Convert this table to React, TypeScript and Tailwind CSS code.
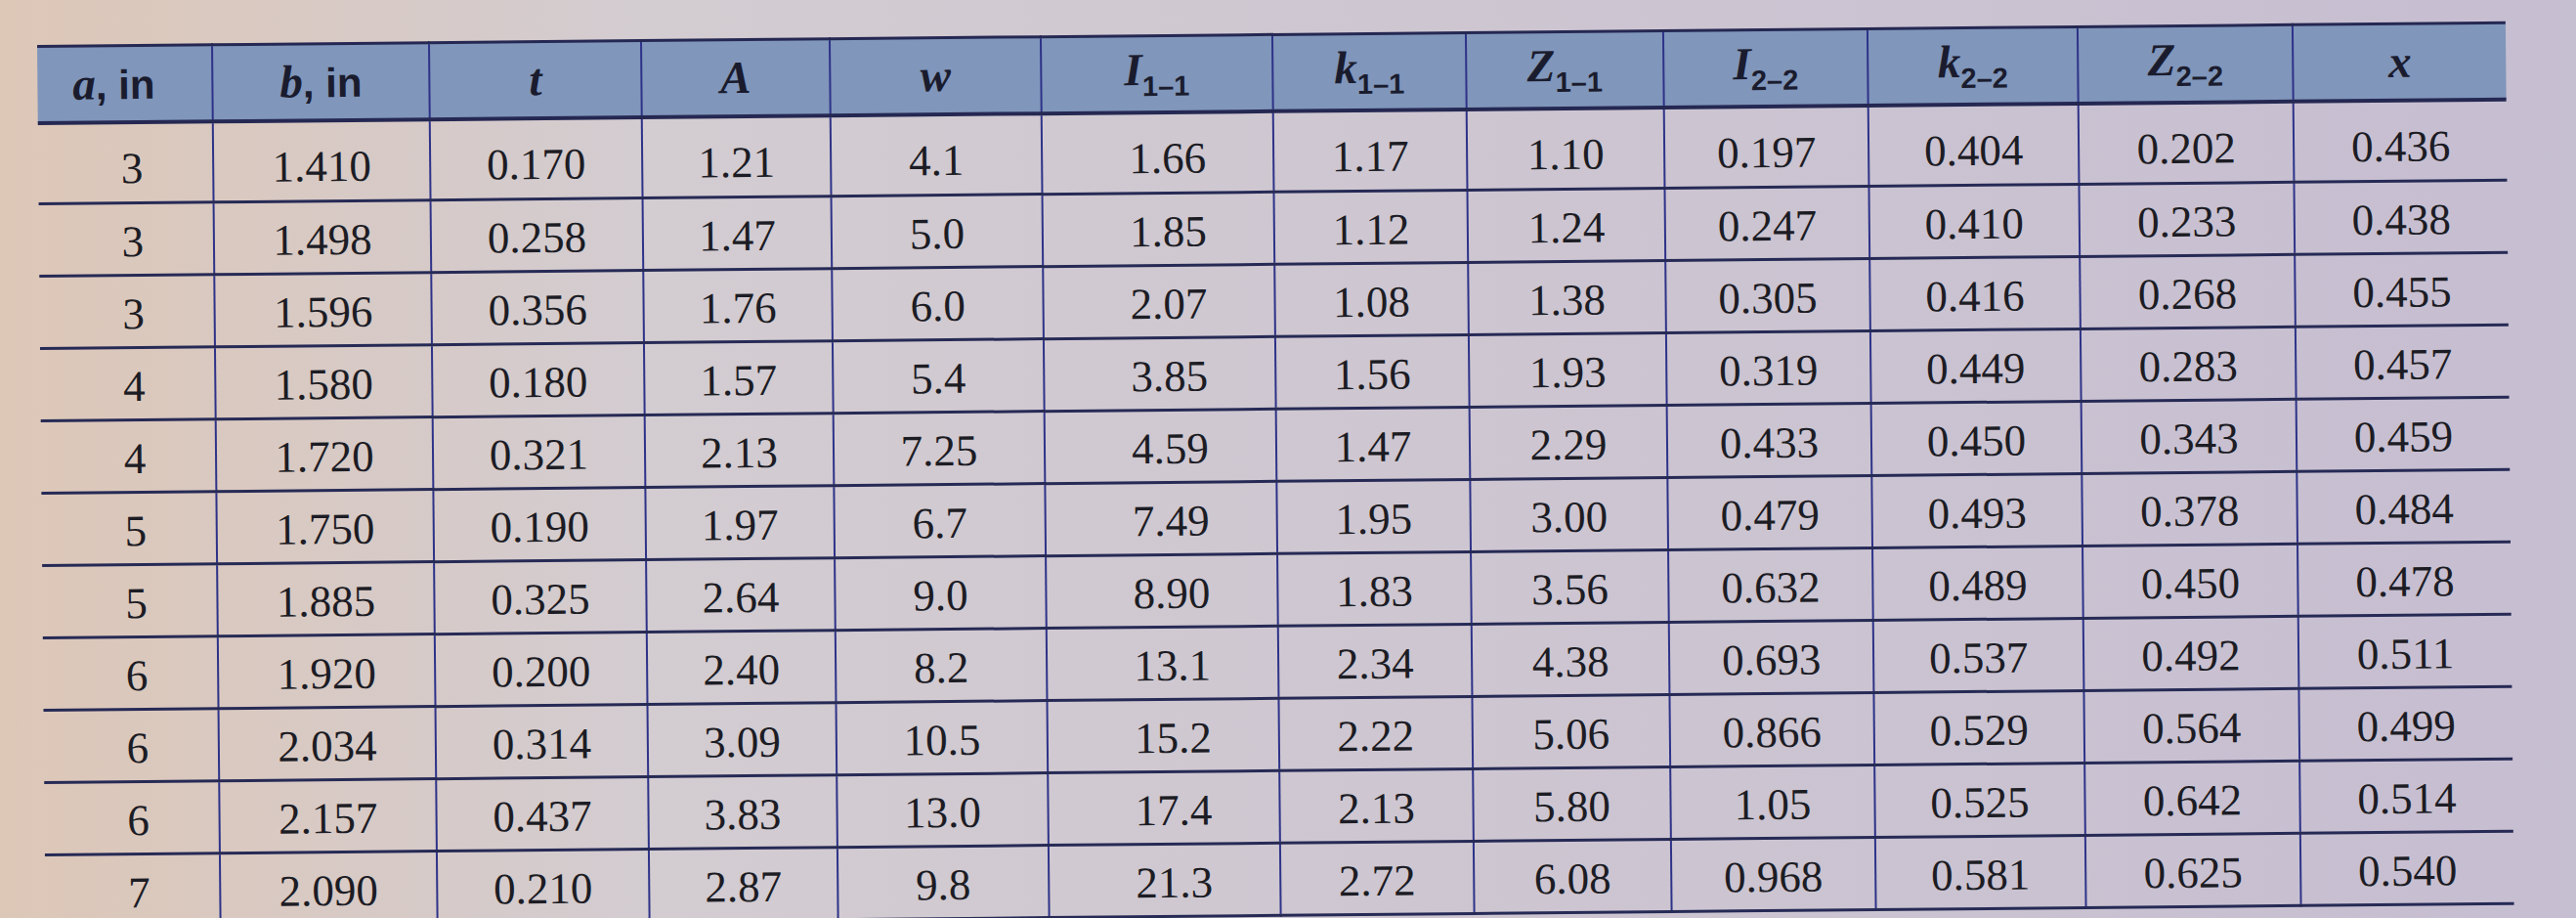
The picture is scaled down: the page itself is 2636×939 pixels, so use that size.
import React from "react";

const widths = [
  "w-[179px]",
  "w-[222px]",
  "w-[217px]",
  "w-[193px]",
  "w-[216px]",
  "w-[237px]",
  "w-[198px]",
  "w-[202px]",
  "w-[209px]",
  "w-[215px]",
  "w-[220px]",
  "w-[218px]",
];

const rows: string[][] = [
  ["3", "1.410", "0.170", "1.21", "4.1", "1.66", "1.17", "1.10", "0.197", "0.404", "0.202", "0.436"],
  ["3", "1.498", "0.258", "1.47", "5.0", "1.85", "1.12", "1.24", "0.247", "0.410", "0.233", "0.438"],
  ["3", "1.596", "0.356", "1.76", "6.0", "2.07", "1.08", "1.38", "0.305", "0.416", "0.268", "0.455"],
  ["4", "1.580", "0.180", "1.57", "5.4", "3.85", "1.56", "1.93", "0.319", "0.449", "0.283", "0.457"],
  ["4", "1.720", "0.321", "2.13", "7.25", "4.59", "1.47", "2.29", "0.433", "0.450", "0.343", "0.459"],
  ["5", "1.750", "0.190", "1.97", "6.7", "7.49", "1.95", "3.00", "0.479", "0.493", "0.378", "0.484"],
  ["5", "1.885", "0.325", "2.64", "9.0", "8.90", "1.83", "3.56", "0.632", "0.489", "0.450", "0.478"],
  ["6", "1.920", "0.200", "2.40", "8.2", "13.1", "2.34", "4.38", "0.693", "0.537", "0.492", "0.511"],
  ["6", "2.034", "0.314", "3.09", "10.5", "15.2", "2.22", "5.06", "0.866", "0.529", "0.564", "0.499"],
  ["6", "2.157", "0.437", "3.83", "13.0", "17.4", "2.13", "5.80", "1.05", "0.525", "0.642", "0.514"],
  ["7", "2.090", "0.210", "2.87", "9.8", "21.3", "2.72", "6.08", "0.968", "0.581", "0.625", "0.540"],
];

function Var({ v, sub, unit }: { v: string; sub?: string; unit?: boolean }) {
  return (
    <span className="whitespace-nowrap">
      <span className="font-['Liberation_Serif',serif] italic font-bold">{v}</span>
      {sub && (
        <span className="font-['Liberation_Sans',sans-serif] not-italic font-bold text-[29px] align-[-11px]">
          {sub}
        </span>
      )}
      {unit && (
        <span className="font-['Liberation_Sans',sans-serif] not-italic font-bold text-[42px]">, in</span>
      )}
    </span>
  );
}

const headers = [
  <Var v="a" unit />,
  <Var v="b" unit />,
  <Var v="t" />,
  <Var v="A" />,
  <Var v="w" />,
  <Var v="I" sub="1–1" />,
  <Var v="k" sub="1–1" />,
  <Var v="Z" sub="1–1" />,
  <Var v="I" sub="2–2" />,
  <Var v="k" sub="2–2" />,
  <Var v="Z" sub="2–2" />,
  <Var v="x" />,
];

export default function App() {
  return (
    <div className="w-[2636px] h-[939px] overflow-hidden bg-linear-to-r from-[#ddc7b7] via-[#d3ccd1] via-25% to-[#c6bed1] pl-[38px] pt-[46px]">
      <table className="table-fixed border-collapse origin-top-left rotate-[-0.55deg] font-['Liberation_Serif',serif] text-[#1c1c24]">
        <thead>
          <tr className="h-[78px] bg-[#8096bb] border-t-[3px] border-b-[4px] border-[#252852]">
            {headers.map((h, i) => (
              <th
                key={i}
                className={`${widths[i]} text-[47px] leading-none text-center font-bold text-[#1a1c2e] border-r-2 border-r-[#2e3388] last:border-r-0 ${
                  i === 0 ? "pr-[22px]" : ""
                }`}
              >
                {h}
              </th>
            ))}
          </tr>
        </thead>
        <tbody>
          {rows.map((r, ri) => (
            <tr
              key={ri}
              className={`${ri === 0 ? "h-[83px]" : "h-[74px]"} border-b-[3px] border-[#262a55]`}
            >
              {r.map((c, ci) => (
                <td
                  key={ci}
                  className={`text-[45px] leading-none text-center border-r-2 border-r-[#2e3388] last:border-r-0 ${
                    ri === 0 ? "pt-[12px]" : "pt-[6px]"
                  } ${ci === 5 ? "pl-[20px]" : ""} ${ci === 0 ? "pl-[14px]" : ""}`}
                >
                  {c}
                </td>
              ))}
            </tr>
          ))}
        </tbody>
      </table>
    </div>
  );
}
